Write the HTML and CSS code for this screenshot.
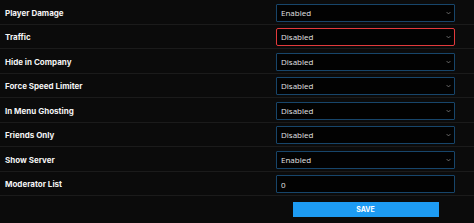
FILE: index.html
```html
<!DOCTYPE html>
<html lang="en">

<head>
    <meta charset="UTF-8">
    <meta name="viewport" content="width=device-width, initial-scale=1.0">
    <title>Server Settings</title>
    <link rel="stylesheet" href="styles.css">
</head>

<body>
    <div class="settings">
        <div class="row">
            <label>Player Damage</label>
            <div class="field">
                <select>
                    <option selected>Enabled</option>
                    <option>Disabled</option>
                </select>
                <svg class="chev" viewBox="0 0 8 5"><path d="M1 1l3 3 3-3" /></svg>
            </div>
        </div>
        <div class="row">
            <label>Traffic</label>
            <div class="field">
                <select class="focused">
                    <option>Enabled</option>
                    <option selected>Disabled</option>
                </select>
                <svg class="chev" viewBox="0 0 8 5"><path d="M1 1l3 3 3-3" /></svg>
            </div>
        </div>
        <div class="row">
            <label>Hide in Company</label>
            <div class="field">
                <select>
                    <option>Enabled</option>
                    <option selected>Disabled</option>
                </select>
                <svg class="chev" viewBox="0 0 8 5"><path d="M1 1l3 3 3-3" /></svg>
            </div>
        </div>
        <div class="row">
            <label>Force Speed Limiter</label>
            <div class="field">
                <select>
                    <option>Enabled</option>
                    <option selected>Disabled</option>
                </select>
                <svg class="chev" viewBox="0 0 8 5"><path d="M1 1l3 3 3-3" /></svg>
            </div>
        </div>
        <div class="row">
            <label>In Menu Ghosting</label>
            <div class="field">
                <select>
                    <option>Enabled</option>
                    <option selected>Disabled</option>
                </select>
                <svg class="chev" viewBox="0 0 8 5"><path d="M1 1l3 3 3-3" /></svg>
            </div>
        </div>
        <div class="row">
            <label>Friends Only</label>
            <div class="field">
                <select>
                    <option>Enabled</option>
                    <option selected>Disabled</option>
                </select>
                <svg class="chev" viewBox="0 0 8 5"><path d="M1 1l3 3 3-3" /></svg>
            </div>
        </div>
        <div class="row">
            <label>Show Server</label>
            <div class="field">
                <select>
                    <option selected>Enabled</option>
                    <option>Disabled</option>
                </select>
                <svg class="chev" viewBox="0 0 8 5"><path d="M1 1l3 3 3-3" /></svg>
            </div>
        </div>
        <div class="row">
            <label>Moderator List</label>
            <div class="field">
                <input type="text" value="0">
            </div>
        </div>
        <div class="row last">
            <span></span>
            <div class="field center">
                <button>SAVE</button>
            </div>
        </div>
    </div>
</body>

</html>
```

FILE: styles.css
```css
* {
    box-sizing: border-box;
}

body {
    margin: 0;
    background-color: #0b0b0b;
    font-family: Inter, "Open Sans", sans-serif;
}

.settings {
    width: 474px;
}

.settings>.row {
    display: grid;
    grid-template-columns: 276px 179px;
    align-items: start;
    height: 24.5px;
    border-bottom: 1px solid #1b1b1b;
}

.settings>.row.last {
    height: 27px;
    border-bottom: none;
}

.settings>.row>label {
    padding-top: 7.5px;
    padding-left: 5px;
    color: #f4f4f4;
    font-size: 8px;
    line-height: 10px;
    font-weight: 700;
}

.settings>.row>.field {
    position: relative;
    height: 18px;
    margin-top: 3.5px;
}

.settings>.row>.field.center {
    display: flex;
    justify-content: center;
    height: 15px;
    margin-top: 6px;
}

.field>select,
.field>input {
    appearance: none;
    display: block;
    width: 100%;
    height: 18px;
    margin: 0;
    padding: 0 4px;
    border: 1px solid #17456a;
    border-radius: 1px;
    background-color: #020202;
    color: #e2e2e2;
    font-family: "Open Sans", sans-serif;
    font-size: 8px;
    line-height: 16px;
    outline: none;
}

.field>select.focused {
    border: 1px solid #e23a3c;
    border-radius: 2px;
}

.field>.chev {
    position: absolute;
    right: 4px;
    top: 7px;
    width: 5px;
    height: 4px;
    fill: none;
    stroke: #8a8a8a;
    stroke-width: 1.2;
}

.field>button {
    display: block;
    width: 146px;
    height: 15px;
    border: none;
    background-color: #1d9bf3;
    color: #ffffff;
    font-family: Inter, sans-serif;
    font-size: 7px;
    font-weight: 700;
}
```
